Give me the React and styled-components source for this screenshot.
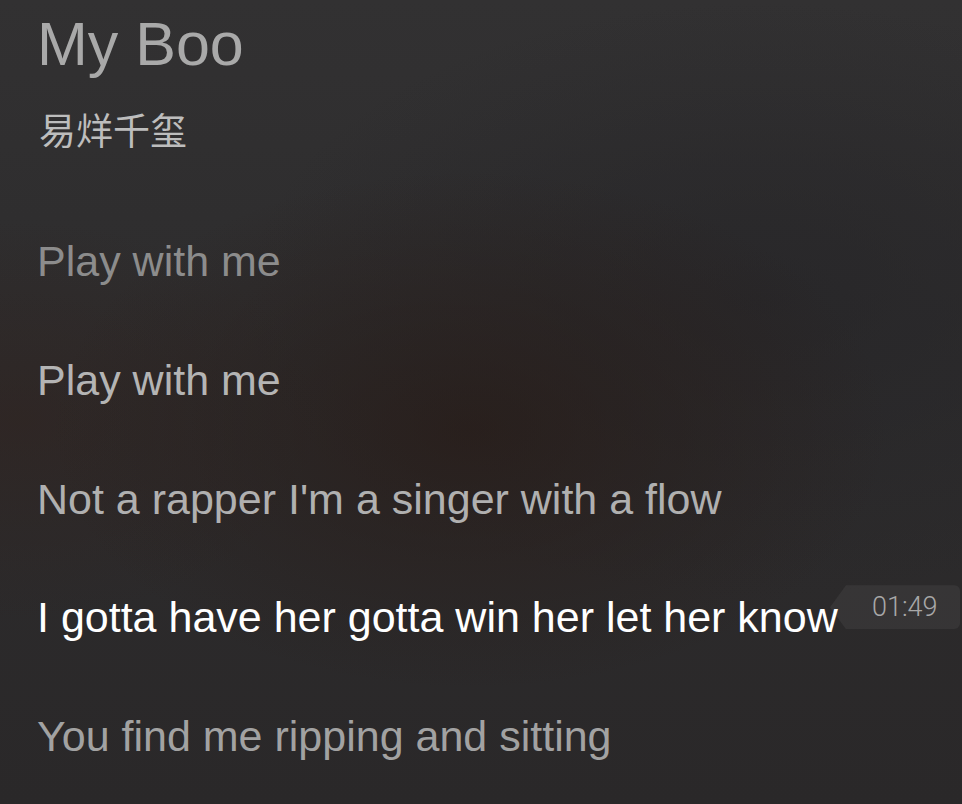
import React from 'react'
import styled, { createGlobalStyle } from 'styled-components'

const GlobalStyle = createGlobalStyle`
  html, body {
    margin: 0;
    padding: 0;
    background: #2c2b2c;
  }
  body {
    font-family: "Liberation Sans", Arial, sans-serif;
  }
`

const Screen = styled.div`
  width: 962px;
  height: 804px;
  overflow: hidden;
  box-sizing: border-box;
  padding: 4px 0 0 37px;
  background:
    radial-gradient(ellipse 420px 260px at 470px 430px, rgba(40, 28, 24, 0.75), rgba(40, 28, 24, 0) 100%),
    radial-gradient(ellipse 300px 200px at 20px 420px, rgba(48, 34, 30, 0.55), rgba(48, 34, 30, 0) 100%),
    radial-gradient(ellipse 520px 300px at 760px 300px, rgba(36, 35, 38, 0.6), rgba(36, 35, 38, 0) 100%),
    linear-gradient(180deg, #323132 0%, #2d2c2d 45%, #2a2829 100%);
`

const Title = styled.h1`
  margin: 0;
  font-size: 61px;
  line-height: 80px;
  font-weight: 400;
  color: #a9a9a9;
`

const Artist = styled.div`
  margin: 15px 0 0 2px;
  font-family: "Noto Sans CJK SC", "Liberation Sans", sans-serif;
  font-size: 37px;
  line-height: 60px;
  color: #bdbdbd;
`

const Lyrics = styled.div`
  margin-top: 43px;
  display: flex;
  flex-direction: column;
`

const Line = styled.div`
  display: flex;
  justify-content: space-between;
  height: 118.75px;
  font-size: 43px;
  line-height: 118.75px;
  white-space: nowrap;
  color: ${p => p.$tone};
`

const TimeTag = styled.div`
  flex-shrink: 0;
  align-self: flex-start;
  margin: 27px 2px 0 -10px;
  width: 130px;
  height: 44px;
  box-sizing: border-box;
  padding-left: 42px;
  display: flex;
  align-items: center;
  background: rgba(255, 255, 255, 0.055);
  border-radius: 0 6px 6px 0;
  clip-path: polygon(0 50%, 16px 0, 100% 0, 100% 100%, 16px 100%);
  font-family: Roboto, "Liberation Sans", sans-serif;
  font-size: 27px;
  line-height: 1;
  font-weight: 300;
  color: #a8a8a8;
`

const lines = [
  { text: 'Play with me', tone: '#8c8c8c' },
  { text: 'Play with me', tone: '#b4b4b4' },
  { text: "Not a rapper I'm a singer with a flow", tone: '#b0b0b0' },
  { text: 'I gotta have her gotta win her let her know', tone: '#ffffff', time: '01:49' },
  { text: 'You find me ripping and sitting', tone: '#a2a2a2' },
]

export default function App() {
  return (
    <>
      <GlobalStyle />
      <Screen>
        <Title>My Boo</Title>
        <Artist>易烊千玺</Artist>
        <Lyrics>
          {lines.map((l, i) => (
            <Line key={i} $tone={l.tone}>
              <span>{l.text}</span>
              {l.time && <TimeTag>{l.time}</TimeTag>}
            </Line>
          ))}
        </Lyrics>
      </Screen>
    </>
  )
}
